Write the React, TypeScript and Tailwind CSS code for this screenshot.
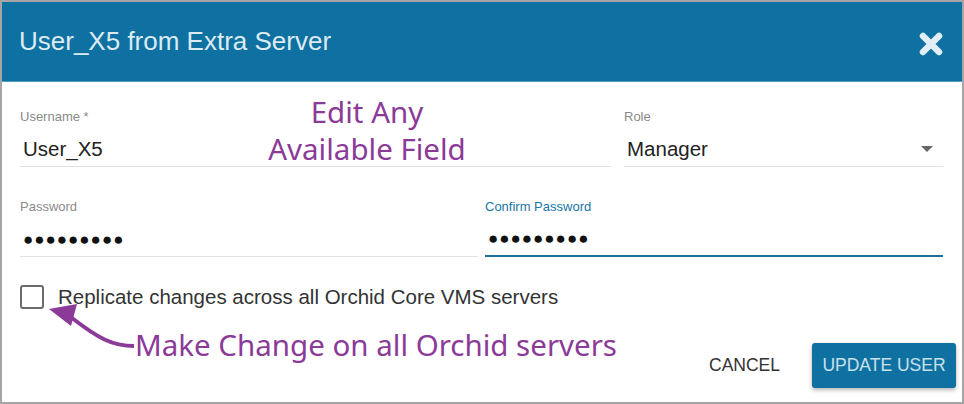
import React from 'react';

const sans = "font-['Liberation_Sans',Arial,sans-serif]";
const note = "font-['Noto_Sans',sans-serif] text-[#8b3a98]";

function Field({
  label,
  value,
  width,
  active,
  select,
  dots,
}: {
  label: string;
  value: string;
  width: string;
  active?: boolean;
  select?: boolean;
  dots?: boolean;
}) {
  return (
    <div className={`${width} flex flex-col`}>
      <span className={`text-[13px] leading-[16px] ${active ? 'text-[#1a75a8]' : 'text-[#8a8a8a]'}`}>
        {label}
      </span>
      <div
        className={`flex h-[42px] items-center justify-between pl-[3px] pt-[8px] ${
          active ? 'border-b-2 border-[#1a6f9c]' : 'border-b border-[#e2e2e2]'
        }`}
      >
        <span className={dots ? 'text-[17px] tracking-[1px] text-[#111]' : 'text-[20.5px] text-[#222]'}>
          {value}
        </span>
        {select && (
          <svg width="12" height="7" viewBox="0 0 12 7" className="mr-[10px]">
            <path d="M0 0h12L6 6z" fill="#666" />
          </svg>
        )}
      </div>
    </div>
  );
}

export default function App() {
  return (
    <div className={`${sans} relative h-[404px] w-[964px] overflow-hidden border-2 border-[#a5a5a5] bg-white`}>
      {/* Header */}
      <div className="flex h-[80px] items-center justify-between border-b border-[#4f9cc4] bg-[#0f71a1] pl-[17px] pr-[18px]">
        <h1 className="text-[26px] text-[#dcebf3]">User_X5 from Extra Server</h1>
        <svg width="26" height="26" viewBox="0 0 26 26" className="mt-[4px]">
          <path d="M5 5L21 21M21 5L5 21" stroke="#e2eef5" strokeWidth="6.5" strokeLinecap="round" />
        </svg>
      </div>

      {/* Form */}
      <div className="flex flex-col px-[18px] pt-[27px]">
        <div className="flex gap-[13px]">
          <Field label="Username *" value="User_X5" width="w-[591px]" />
          <Field label="Role" value="Manager" width="w-[319px]" select />
        </div>
        <div className="mt-[32px] flex gap-[7px]">
          <Field label="Password" value="●●●●●●●●●" width="w-[458px]" dots />
          <Field label="Confirm Password" value="●●●●●●●●●" width="w-[458px]" dots active />
        </div>

        <label className="mt-[25px] flex items-center gap-[14px]">
          <span className="h-[24px] w-[24px] rounded-[3px] border-2 border-[#6b6b6b]" />
          <span className="text-[20.5px] text-[#333]">Replicate changes across all Orchid Core VMS servers</span>
        </label>

        <div className="mt-[30px] flex items-center justify-end gap-[32px]">
          <button className="text-[17.5px] text-[#333]">CANCEL</button>
          <button className="mr-[-12px] h-[45px] w-[144px] rounded-[3px] bg-[#0f71a1] text-[17.5px] text-[#c9e0ed] shadow-[0_2px_4px_rgba(0,0,0,0.3)]">
            UPDATE USER
          </button>
        </div>
      </div>

      {/* Annotations */}
      <div className={`${note} absolute left-[258px] top-[91px] w-[214px] text-center text-[29.5px] leading-[37px]`}>
        Edit Any
        <br />
        Available Field
      </div>
      <div className={`${note} absolute left-[133px] top-[323px] text-[29.5px] leading-[40px]`}>
        Make Change on all Orchid servers
      </div>
      <svg className="absolute left-0 top-0" width="964" height="404" viewBox="0 0 964 404">
        <path d="M132 344 C110 344 96 336 70 316" fill="none" stroke="#8b3a98" strokeWidth="4" />
        <path d="M47 307 L75 302 L69 324 Z" fill="#8b3a98" />
      </svg>
    </div>
  );
}
